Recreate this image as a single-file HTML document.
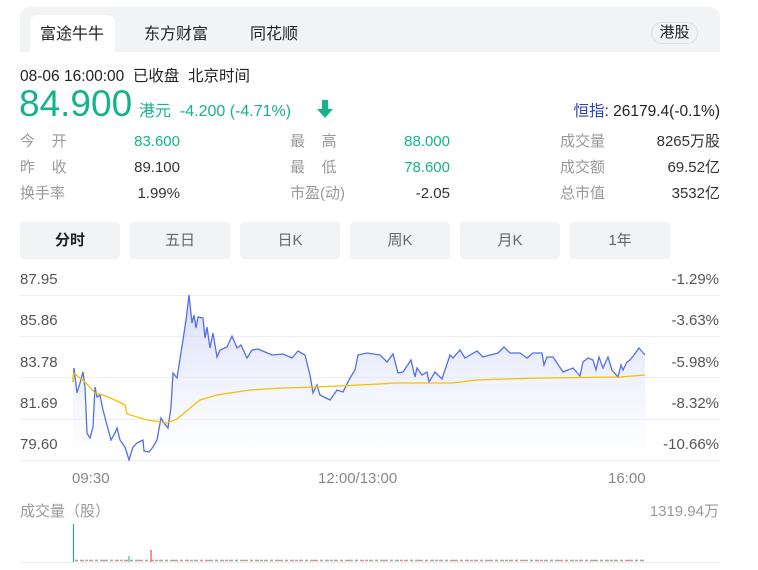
<!DOCTYPE html>
<html><head><meta charset="utf-8"><style>
*{margin:0;padding:0;box-sizing:border-box}
body{width:758px;height:570px;background:#fff;font-family:"Liberation Sans","Noto Sans CJK SC",sans-serif;color:#333;position:relative;overflow:hidden}
.a{position:absolute;white-space:nowrap}
.g{color:#14b38e}.l{color:#999}
.btn{position:absolute;top:222px;width:100px;height:37px;background:#f2f3f5;border-radius:4px;text-align:center;line-height:37px;font-size:15px;color:#666}
.r{text-align:right}
.t{font-size:15px;line-height:26px}
</style></head><body>
<div class="a" style="left:20px;top:7px;width:700px;height:45px;background:#f2f3f5;border-radius:10px 10px 0 0"></div>
<div class="a" style="left:30px;top:15px;width:85px;height:37px;background:#fff;border-radius:8px 8px 0 0"></div>
<div class="a" style="left:40px;top:20px;font-size:16px;color:#222">富途牛牛</div>
<div class="a" style="left:144px;top:20px;font-size:16px;color:#222">东方财富</div>
<div class="a" style="left:250px;top:20px;font-size:16px;color:#222">同花顺</div>
<div class="a" style="left:651px;top:22px;width:47px;height:22px;border:1px solid #ddd;border-radius:11px;font-size:15px;line-height:20px;text-align:center;color:#222">港股</div>
<div class="a" style="left:20px;top:64px;font-size:15.5px;color:#222">08-06 16:00:00&nbsp; 已收盘&nbsp; 北京时间</div>
<div class="a g" style="left:19px;top:83px;font-size:37px;line-height:42px">84.900</div>
<div class="a g" style="left:139px;top:97px;font-size:16px">港元&nbsp; -4.200 (-4.71%)</div>
<svg class="a" style="left:316px;top:99px" width="18" height="20"><path d="M6 1h6v9h5l-8 9-8-9h5z" fill="#14b38e"/></svg>
<div class="a" style="right:38px;top:99px;font-size:15.5px;color:#222"><span style="color:#2a3fb8">恒指</span>: 26179.4(-0.1%)</div>
<div class="a l t" style="left:20px;top:129px">今&nbsp;&nbsp;&nbsp;&nbsp;开<br>昨&nbsp;&nbsp;&nbsp;&nbsp;收<br>换手率</div>
<div class="a r t" style="left:100px;width:80px;top:129px"><span class="g">83.600</span><br>89.100<br>1.99%</div>
<div class="a l t" style="left:290px;top:129px">最&nbsp;&nbsp;&nbsp;&nbsp;高<br>最&nbsp;&nbsp;&nbsp;&nbsp;低<br>市盈(动)</div>
<div class="a r t" style="left:370px;width:80px;top:129px"><span class="g">88.000</span><br><span class="g">78.600</span><br>-2.05</div>
<div class="a l t" style="left:560px;top:129px">成交量<br>成交额<br>总市值</div>
<div class="a r t" style="left:620px;width:100px;top:129px">8265万股<br>69.52亿<br>3532亿</div>
<div class="btn" style="left:20px;color:#222;font-weight:bold">分时</div>
<div class="btn" style="left:130px">五日</div>
<div class="btn" style="left:240px">日K</div>
<div class="btn" style="left:350px">周K</div>
<div class="btn" style="left:460px">月K</div>
<div class="btn" style="left:570px">1年</div>
<div class="a" style="left:20px;top:259px;font-size:15px;line-height:41.3px;color:#555">87.95<br>85.86<br>83.78<br>81.69<br>79.60</div>
<div class="a r" style="left:620px;width:99px;top:259px;font-size:15px;line-height:41.3px;color:#555">-1.29%<br>-3.63%<br>-5.98%<br>-8.32%<br>-10.66%</div>
<svg class="a" style="left:0;top:0" width="758" height="570">
<defs><linearGradient id="gr" x1="0" y1="0" x2="0" y2="1"><stop offset="0" stop-color="#c9d1f5" stop-opacity=".75"/><stop offset="1" stop-color="#fff" stop-opacity=".4"/></linearGradient></defs>
<g stroke="#eee" stroke-width="1"><line x1="20" y1="295.5" x2="720" y2="295.5"/><line x1="20" y1="336.5" x2="720" y2="336.5"/><line x1="20" y1="377.5" x2="720" y2="377.5"/><line x1="20" y1="419.5" x2="720" y2="419.5"/><line x1="20" y1="460.5" x2="720" y2="460.5"/><line x1="20" y1="562.5" x2="720" y2="562.5"/></g>
<polygon fill="url(#gr)" points="73,460 73,382 74,368 77,393 80,383 83,372 85,387 87,433 90,438 93,427 95,387 97,397 100,395 103,410 107,425 111,440 115,433 117,428 120,440 125,447 129,460 133,447 137,443 143,440 144,451 149,452 153,447 157,440 161,418 164,423 168,428 171,407 173,373 177,378 183,340 186,320 189,295 192,323 194,315 196,328 198,317 203,318 205,338 207,327 210,348 213,333 217,357 220,350 227,347 232,336 237,348 241,345 247,358 252,350 258,349 265,352 272,355 283,354 292,358 298,351 305,355 310,375 313,393 317,385 320,395 330,400 337,390 343,392 350,378 355,370 358,355 367,353 380,355 387,362 393,354 398,373 403,372 411,360 415,377 417,368 422,375 427,372 429,382 435,372 442,379 450,355 453,358 460,350 465,358 477,351 483,357 490,355 498,353 504,347 510,353 520,353 527,358 533,353 542,353 544,365 547,357 553,357 563,372 573,368 580,376 583,362 588,358 593,360 596,370 599,357 603,368 608,357 612,370 618,377 621,365 623,370 627,362 630,360 634,355 639,348 645,355 646,460"/>
<polyline fill="none" stroke="#5470e8" stroke-width="1.3" points="73,382 74,368 77,393 80,383 83,372 85,387 87,433 90,438 93,427 95,387 97,397 100,395 103,410 107,425 111,440 115,433 117,428 120,440 125,447 129,460 133,447 137,443 143,440 144,451 149,452 153,447 157,440 161,418 164,423 168,428 171,407 173,373 177,378 183,340 186,320 189,295 192,323 194,315 196,328 198,317 203,318 205,338 207,327 210,348 213,333 217,357 220,350 227,347 232,336 237,348 241,345 247,358 252,350 258,349 265,352 272,355 283,354 292,358 298,351 305,355 310,375 313,393 317,385 320,395 330,400 337,390 343,392 350,378 355,370 358,355 367,353 380,355 387,362 393,354 398,373 403,372 411,360 415,377 417,368 422,375 427,372 429,382 435,372 442,379 450,355 453,358 460,350 465,358 477,351 483,357 490,355 498,353 504,347 510,353 520,353 527,358 533,353 542,353 544,365 547,357 553,357 563,372 573,368 580,376 583,362 588,358 593,360 596,370 599,357 603,368 608,357 612,370 618,377 621,365 623,370 627,362 630,360 634,355 639,348 645,355"/>
<polyline fill="none" stroke="#f5c000" stroke-width="1.3" points="73,382 74,373 85,382 95,393 103,395 115,400 125,405 127,414 147,420 167,423 177,419 190,408 200,400 217,395 250,390 283,388 317,387 380,384 395,383 452,383 477,380 503,379 543,378 620,377 645,375"/>
<line x1="73.5" y1="524" x2="73.5" y2="562" stroke="#14b38e" stroke-width="1.2"/>
<line x1="151" y1="550" x2="151" y2="562" stroke="#f04848" stroke-width="1.2"/>
<line x1="129" y1="556" x2="129" y2="562" stroke="#14b38e" stroke-width="1"/>
<line x1="75" y1="560.5" x2="645" y2="560.5" stroke="#e88" stroke-width="1.5" stroke-dasharray="3,2"/>
<line x1="75" y1="560.5" x2="645" y2="560.5" stroke="#5cc9a8" stroke-width="1.5" stroke-dasharray="2,5"/>
</svg>
<div class="a" style="left:72px;top:470px;font-size:15px;color:#888">09:30</div>
<div class="a" style="left:318px;top:470px;font-size:15px;color:#888">12:00/13:00</div>
<div class="a" style="left:608px;top:470px;font-size:15px;color:#888">16:00</div>
<div class="a" style="left:20px;top:500px;font-size:15px;color:#999">成交量（股）</div>
<div class="a r" style="left:600px;width:119px;top:500px;font-size:15px;color:#999">1319.94万</div>
</body></html>
